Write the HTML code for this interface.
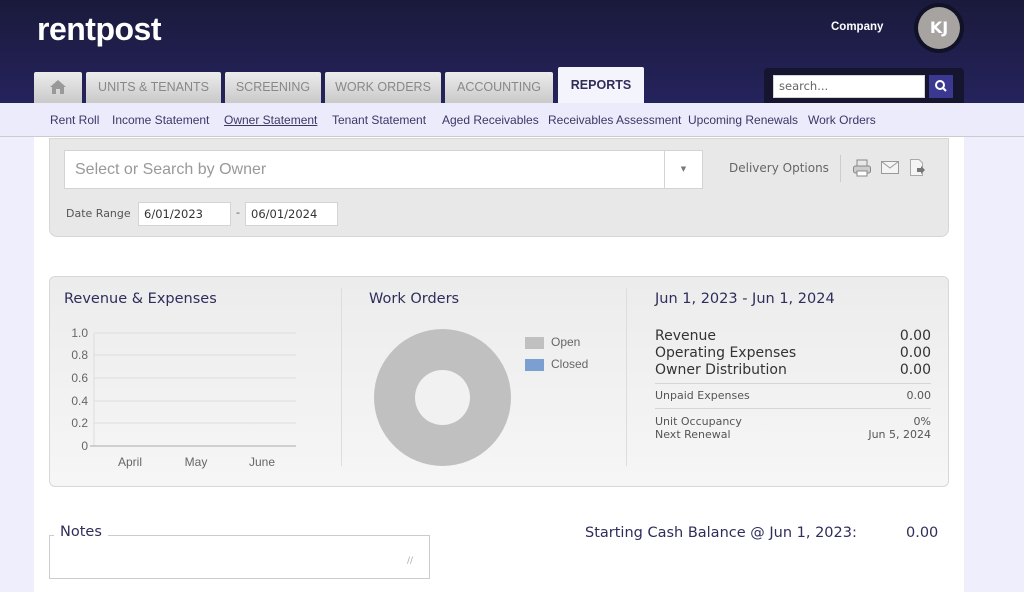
<!DOCTYPE html>
<html><head><meta charset="utf-8"><style>
*{box-sizing:border-box;margin:0;padding:0}
body{width:1024px;height:592px;overflow:hidden;background:#eeeefc;font-family:"DejaVu Sans","Liberation Sans",sans-serif;position:relative}
.abs{position:absolute}
#hdr{left:0;top:0;width:1024px;height:103px;background:linear-gradient(#1a1a3c,#25235c)}
.logo{left:37px;top:11px;color:#fff;font-family:"Liberation Sans",sans-serif;font-size:32px;font-weight:bold;letter-spacing:-0.5px}
.tab{top:72px;height:31px;background:linear-gradient(#ececec,#c9c9c9);color:#888;font-size:12.5px;font-family:"Liberation Sans",sans-serif;text-align:center;line-height:31px;border-radius:2px 2px 0 0}
#sub{left:0;top:103px;width:1024px;height:34px;background:#ecebfb;border-bottom:1px solid #ccc}
#sub span{position:absolute;top:10px;font-size:12px;font-family:"Liberation Sans",sans-serif;color:#3a3866}
#main{left:34px;top:137px;width:930px;height:455px;background:#fff}
.panel{background:#e8e8e8;border:1px solid #d6d6d6;border-radius:0 0 8px 8px}
.card{background:linear-gradient(#ececec,#f6f6f6);border:1px solid #d8d8d8;border-radius:6px}
.inp{background:#fff;border:1px solid #d4d4d4;font-size:11.5px;color:#333;padding:4px 5px}
.h{color:#2f2d5a;font-size:14.5px}
.r{font-size:14px;color:#333}
.s{font-size:11px;color:#555}
</style></head><body>
<div id="hdr" class="abs"></div>
<div class="abs logo">rentpost</div>
<div class="abs" style="left:831px;top:21px;color:#fff;font-size:11.5px;font-family:'Liberation Sans',sans-serif;font-weight:bold">Company</div>
<div class="abs" style="left:914px;top:3px;width:50px;height:50px;border-radius:50%;background:#111128"></div>
<div class="abs" style="left:918px;top:7px;width:42px;height:42px;border-radius:50%;background:#a6a3a0;color:#fff;font-weight:bold;font-size:16px;text-align:center;line-height:42px">KJ</div>
<div class="abs" style="left:764px;top:68px;width:200px;height:35px;background:#16152f;border-radius:4px 4px 0 0"></div>
<div class="abs inp" style="left:773px;top:75px;width:152px;height:23px;padding:3px 5px;color:#666">search...</div>
<div class="abs" style="left:929px;top:75px;width:24px;height:23px;background:#3a3891"><svg width="24" height="23"><circle cx="11" cy="10" r="4" stroke="#fff" stroke-width="2" fill="none"/><line x1="14" y1="13" x2="17" y2="16" stroke="#fff" stroke-width="2"/></svg></div>
<div class="abs tab" style="left:34px;width:48px"><svg width="18" height="16" viewBox="0 0 18 16" style="margin-top:7px"><path d="M9 1 L1 8 H3 V15 H7 V10 H11 V15 H15 V8 H17 Z" fill="#999"/></svg></div>
<div class="abs tab" style="left:86px;width:135px">UNITS &amp; TENANTS</div>
<div class="abs tab" style="left:225px;width:96px">SCREENING</div>
<div class="abs tab" style="left:325px;width:116px">WORK ORDERS</div>
<div class="abs tab" style="left:445px;width:108px">ACCOUNTING</div>
<div class="abs tab" style="left:558px;top:67px;height:36px;width:86px;background:#f4f4fc;color:#2f2d5a;font-weight:bold;line-height:36px">REPORTS</div>
<div id="sub" class="abs">
<span style="left:50px">Rent Roll</span><span style="left:112px">Income Statement</span><span style="left:224px;text-decoration:underline">Owner Statement</span><span style="left:332px">Tenant Statement</span><span style="left:442px">Aged Receivables</span><span style="left:548px">Receivables Assessment</span><span style="left:688px">Upcoming Renewals</span><span style="left:808px">Work Orders</span>
</div>
<div id="main" class="abs"></div>
<div class="abs panel" style="left:49px;top:138px;width:900px;height:99px"></div>
<div class="abs inp" style="left:64px;top:150px;width:601px;height:39px;font-family:'Liberation Sans',sans-serif;font-size:16px;color:#999;padding:10px"> Select or Search by Owner</div>
<div class="abs inp" style="left:664px;top:150px;width:39px;height:39px;text-align:center;color:#777;font-size:7px;line-height:28px">&#9660;</div>
<div class="abs" style="left:729px;top:161px;font-size:12px;color:#666">Delivery Options</div>
<div class="abs" style="left:840px;top:155px;width:1px;height:27px;background:#ccc"></div>
<svg class="abs" style="left:852px;top:159px" width="20" height="18"><rect x="5" y="1" width="10" height="6" fill="none" stroke="#888"/><rect x="1.5" y="7" width="17" height="7" rx="2" fill="#ccc" stroke="#888"/><rect x="5" y="12" width="10" height="5" fill="#fff" stroke="#888"/></svg>
<svg class="abs" style="left:881px;top:161px" width="18" height="14"><rect x="0.5" y="0.5" width="17" height="12" fill="#f4f4f4" stroke="#999"/><path d="M0.5 0.5 L9 7 L17.5 0.5" fill="none" stroke="#999"/></svg>
<svg class="abs" style="left:910px;top:159px" width="18" height="18"><path d="M0.5 0.5 H9 L12.5 4 V16.5 H0.5 Z" fill="#f4f4f4" stroke="#aaa"/><path d="M7 9 H11 V7 L15 11 L11 15 V13 H7 Z" fill="#777"/></svg>
<div class="abs" style="left:66px;top:207px;font-size:11px;color:#555">Date Range</div>
<div class="abs inp" style="left:138px;top:202px;width:93px;height:24px">6/01/2023</div>
<div class="abs" style="left:236px;top:206px;font-size:11px;color:#555">-</div>
<div class="abs inp" style="left:245px;top:202px;width:93px;height:24px">06/01/2024</div>
<div class="abs card" style="left:49px;top:276px;width:900px;height:211px"></div>
<div class="abs h" style="left:64px;top:291px">Revenue &amp; Expenses</div>
<div class="abs" style="left:341px;top:288px;width:1px;height:178px;background:#ddd"></div>
<div class="abs" style="left:626px;top:288px;width:1px;height:178px;background:#ddd"></div>
<svg class="abs" style="left:60px;top:322px" width="250" height="150">
<g stroke="#ddd"><line x1="34" y1="11" x2="236" y2="11"/><line x1="34" y1="33" x2="236" y2="33"/><line x1="34" y1="56" x2="236" y2="56"/><line x1="34" y1="79" x2="236" y2="79"/><line x1="34" y1="101" x2="236" y2="101"/><line x1="34" y1="11" x2="34" y2="124"/></g>
<line x1="30" y1="124" x2="236" y2="124" stroke="#aaa"/>
<g font-family="Liberation Sans,sans-serif" font-size="12" fill="#666" text-anchor="end"><text x="28" y="15">1.0</text><text x="28" y="37">0.8</text><text x="28" y="60">0.6</text><text x="28" y="83">0.4</text><text x="28" y="105">0.2</text><text x="28" y="128">0</text></g>
<g font-family="Liberation Sans,sans-serif" font-size="12" fill="#666" text-anchor="middle"><text x="70" y="144">April</text><text x="136" y="144">May</text><text x="202" y="144">June</text></g>
</svg>
<div class="abs h" style="left:369px;top:291px">Work Orders</div>
<div class="abs" style="left:374px;top:329px;width:137px;height:137px;border-radius:50%;background:#c0c0c0"></div>
<div class="abs" style="left:415px;top:370px;width:55px;height:55px;border-radius:50%;background:#f1f1f1"></div>
<div class="abs" style="left:525px;top:337px;width:19px;height:12px;background:#c0c0c0"></div>
<div class="abs" style="left:525px;top:359px;width:19px;height:12px;background:#7a9fd0"></div>
<div class="abs" style="left:551px;top:335px;font-family:'Liberation Sans',sans-serif;font-size:12px;color:#666">Open</div>
<div class="abs" style="left:551px;top:357px;font-family:'Liberation Sans',sans-serif;font-size:12px;color:#666">Closed</div>
<div class="abs h" style="left:655px;top:291px">Jun 1, 2023 - Jun 1, 2024</div>
<div class="abs r" style="left:655px;top:328px;line-height:17px">Revenue<br>Operating Expenses<br>Owner Distribution</div>
<div class="abs r" style="left:860px;width:71px;text-align:right;top:328px;line-height:17px">0.00<br>0.00<br>0.00</div>
<div class="abs" style="left:655px;top:383px;width:276px;height:1px;background:#d6d6d6"></div>
<div class="abs s" style="left:655px;top:389px">Unpaid Expenses</div>
<div class="abs s" style="left:860px;width:71px;text-align:right;top:389px">0.00</div>
<div class="abs" style="left:655px;top:408px;width:276px;height:1px;background:#d6d6d6"></div>
<div class="abs s" style="left:655px;top:415px;line-height:13px">Unit Occupancy<br>Next Renewal</div>
<div class="abs s" style="left:831px;width:100px;text-align:right;top:415px;line-height:13px">0%<br>Jun 5, 2024</div>
<div class="abs" style="left:49px;top:535px;width:381px;height:44px;border:1px solid #ccc"></div>
<div class="abs h" style="left:54px;top:524px;background:#fff;padding:0 6px;font-size:14.5px">Notes</div>
<div class="abs" style="left:407px;top:556px;font-size:9px;color:#aaa">//</div>
<div class="abs h" style="left:585px;top:525px">Starting Cash Balance @ Jun 1, 2023:</div>
<div class="abs h" style="left:906px;top:525px">0.00</div>
</body></html>
